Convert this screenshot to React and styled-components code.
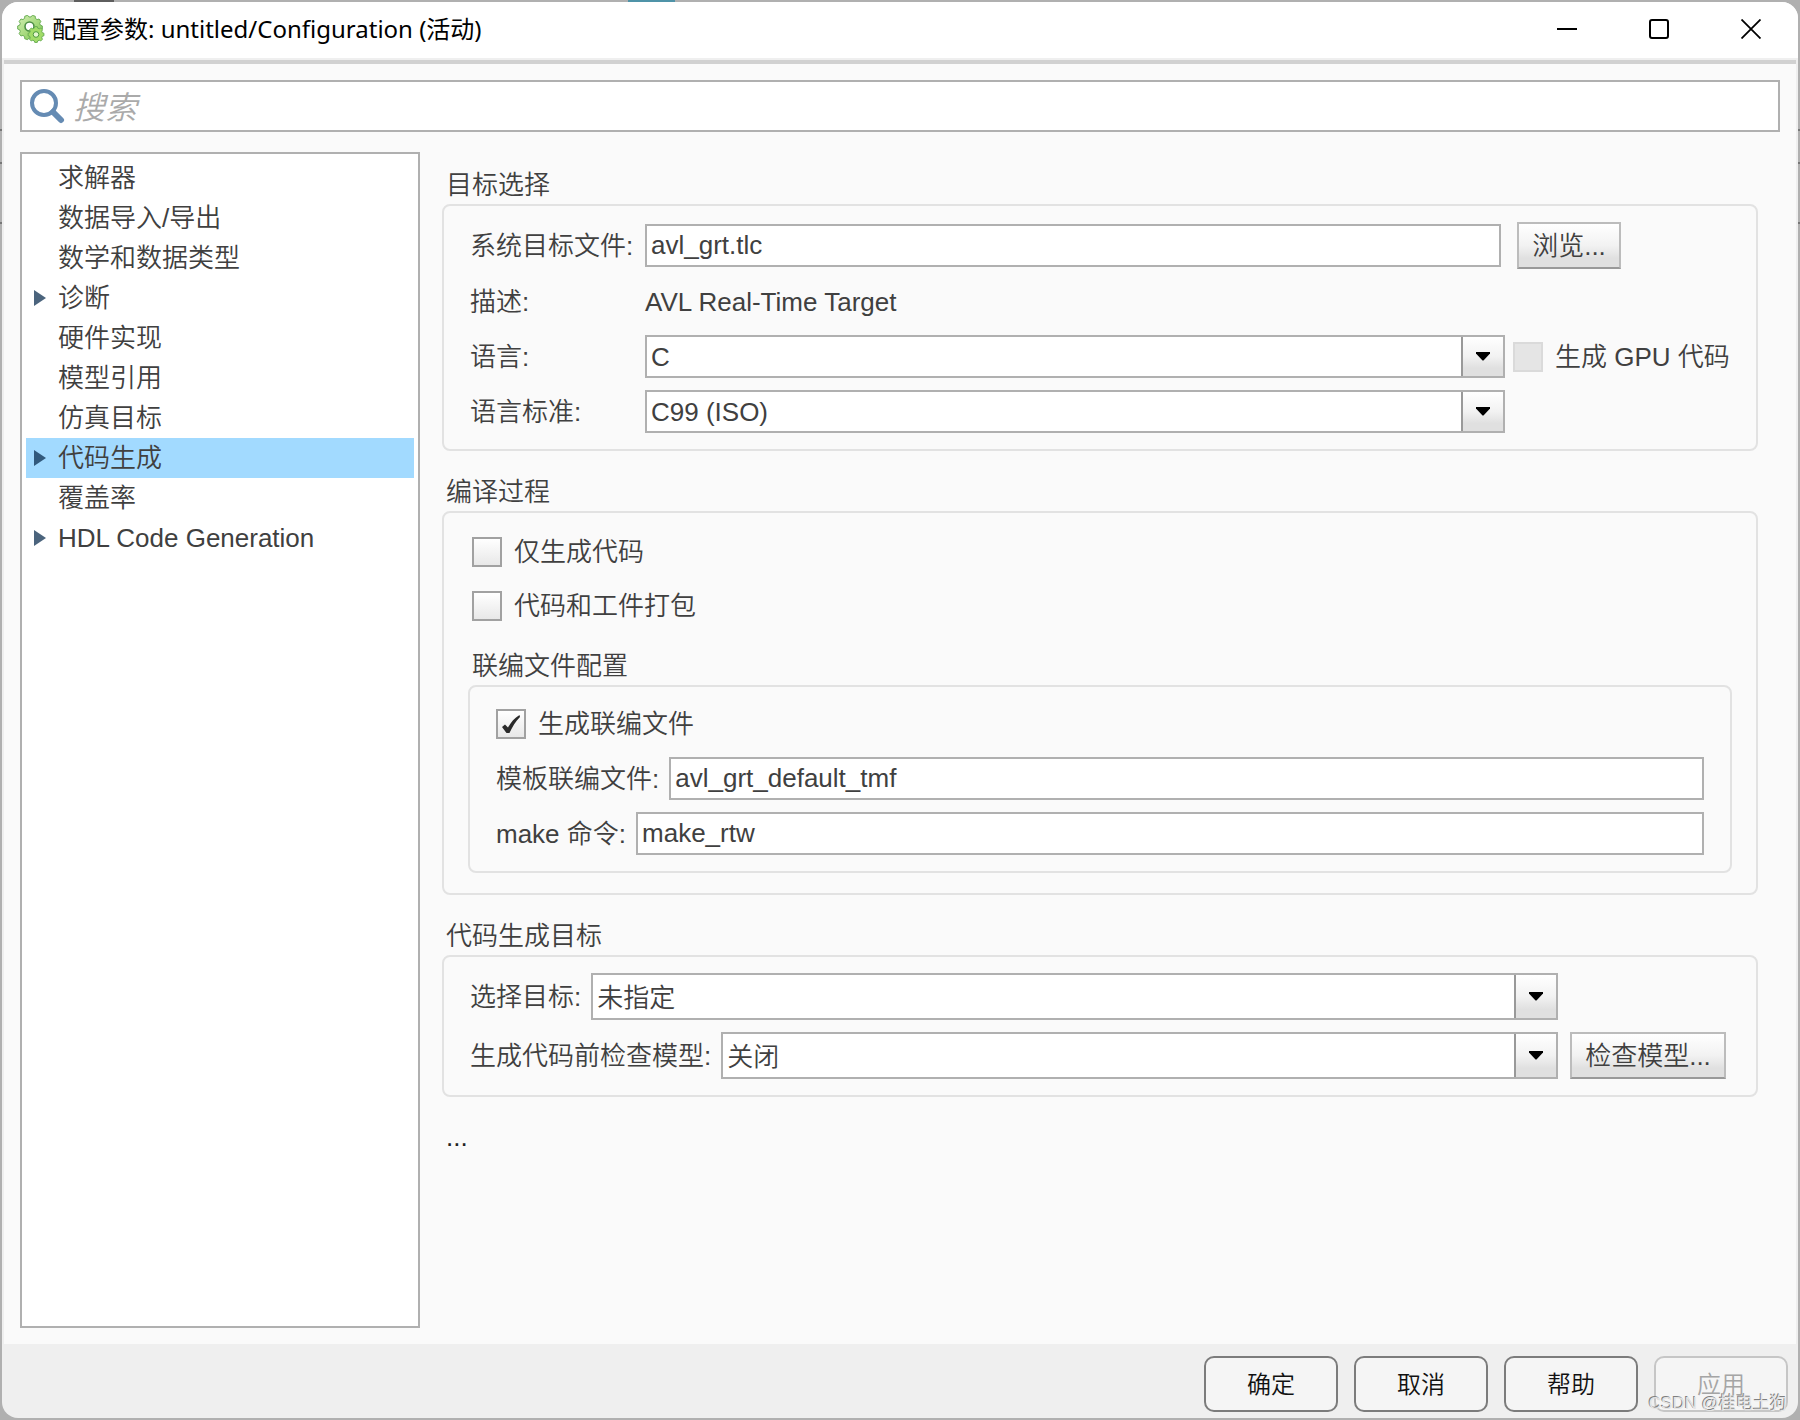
import { useState } from "react";
import styled, { createGlobalStyle } from "styled-components";

const GlobalStyle = createGlobalStyle`
  * {
    box-sizing: border-box;
  }
  body {
    margin: 0;
    background-color: #b0b0b0;
    color: #404040;
    font-family: "Liberation Sans", "Noto Sans CJK SC", sans-serif;
    font-size: 26px;
    font-weight: 350;
  }
  button, input, select {
    font: inherit;
    color: inherit;
  }
`;

// slivers of the windows behind show round the edge
const Desktop = styled.div`
  min-height: 100vh;
  display: flex;
  padding: 2px;
  background-color: #b0b0b0;
  background-image: linear-gradient(#5e5e5e, #5e5e5e),
    linear-gradient(#4f93a8, #4f93a8), linear-gradient(#777777, #777777),
    linear-gradient(#777777, #777777), linear-gradient(#777777, #777777);
  background-repeat: no-repeat;
  background-size: 40px 2px, 47px 2px, 100% 2px, 100% 2px, 100% 2px;
  background-position: 74px 0, 628px 0, 0 129px, 0 162px, 0 222px;
`;

const Window = styled.div`
  flex: 1;
  min-width: 0;
  display: flex;
  flex-direction: column;
  border-radius: 16px;
  overflow: hidden;
  background-color: #efefef;
`;

const TitleBar = styled.header`
  height: 56px;
  display: flex;
  align-items: center;
  padding: 0 1px 2px 15px;
  background-color: #ffffff;
`;

const AppIcon = styled.svg`
  width: 28px;
  height: 28px;
  flex: none;
`;

const Title = styled.h1`
  flex: 1;
  margin: 0 0 0 7px;
  color: #000000;
  font-family: "Noto Sans", "Noto Sans CJK SC", sans-serif;
  font-size: 24px;
  font-weight: 400;
  line-height: 32px;
`;

const WindowButton = styled.button`
  width: 92px;
  height: 54px;
  display: flex;
  align-items: center;
  justify-content: center;
  padding: 0;
  border: none;
  background: none;
  color: #000000;

  &:hover {
    background-color: #e9e9e9;
  }
`;

const Content = styled.main`
  flex: 1;
  display: flex;
  flex-direction: column;
  gap: 20px;
  margin: 2px 2px 0;
  padding: 16px;
  border-top: 4px solid #d1d1d1;
  background-color: #fafafa;
`;

const SearchBox = styled.label`
  height: 52px;
  display: flex;
  align-items: center;
  gap: 8px;
  padding-left: 7px;
  border: 2px solid #b0b0b0;
  background-color: #ffffff;
`;

const SearchInput = styled.input`
  flex: 1;
  min-width: 0;
  height: 48px;
  padding: 4px 0 0;
  border: none;
  outline: none;
  background: none;
  font-size: 32px;

  &::placeholder {
    color: #aaaaaa;
    font-style: italic;
    opacity: 1;
  }
`;

const Columns = styled.div`
  flex: 1;
  display: flex;
  gap: 22px;
`;

const Tree = styled.ul`
  width: 400px;
  flex: none;
  margin: 0;
  padding: 4px;
  border: 2px solid #b0b0b0;
  background-color: #ffffff;
  list-style: none;
`;

const TreeRow = styled.button`
  width: 100%;
  height: 40px;
  display: flex;
  align-items: center;
  gap: 12px;
  padding: 0 0 0 8px;
  border: none;
  background-color: ${({ $active }) => ($active ? "#a2daff" : "transparent")};
  text-align: left;
  line-height: 40px;
`;

const TreeArrow = styled.span`
  width: 12px;
  height: 16px;
  flex: none;
  background-color: ${({ $active }) => ($active ? "#31597c" : "#4b647d")};
  clip-path: polygon(0 0, 100% 50%, 0 100%);
  visibility: ${({ $open }) => ($open ? "visible" : "hidden")};
`;

const Pane = styled.div`
  flex: 1;
  min-width: 0;
  display: flex;
  flex-direction: column;
  gap: 20px;
  padding: 12px 22px 0 0;
`;

const GroupTitle = styled.h2`
  margin: 0;
  padding: 2px 0 0 4px;
  font-size: 26px;
  font-weight: 350;
  line-height: 38px;
`;

const GroupBox = styled.div`
  display: flex;
  flex-direction: column;
  gap: 12px;
  padding: ${({ $nested }) => ($nested ? "18px 24px 20px" : "16px 26px")};
  border: 2px solid #e2e2e2;
  border-radius: 8px;
`;

const NestedGroup = styled.section`
  padding-top: 6px;
`;

const TargetRow = styled.div`
  display: grid;
  grid-template-columns: 175px minmax(0, 1fr) 225px;
  align-items: center;
  min-height: ${({ $text }) => ($text ? "42px" : "0")};
  line-height: 40px;
`;

const Aside = styled.div`
  display: flex;
  padding-left: ${({ $wide }) => ($wide ? "12px" : "8px")};
`;

const FieldCell = styled.div`
  display: flex;
  padding-right: 4px;
`;

const ObjectiveRow = styled.div`
  display: grid;
  grid-template-columns: minmax(0, 1fr) 160px;
  gap: 12px;
  justify-items: start;
`;

const FormRow = styled.div`
  width: 100%;
  display: flex;
  align-items: center;
  gap: 10px;
`;

const Label = styled.label`
  flex: none;
  line-height: 40px;
  white-space: nowrap;
`;

const TextInput = styled.input`
  flex: 1;
  min-width: 0;
  height: 43px;
  padding: 0 4px;
  border: 2px solid #b0b0b0;
  border-radius: 0;
  background-color: #ffffff;
`;

const SelectBox = styled.div`
  flex: 1;
  min-width: 0;
  position: relative;
  display: flex;
`;

const StyledSelect = styled.select`
  flex: 1;
  min-width: 0;
  height: ${({ $tall }) => ($tall ? "47px" : "43px")};
  padding: ${({ $tall }) => ($tall ? "2px 48px 0 4px" : "0 48px 2px 4px")};
  appearance: none;
  border: 2px solid #b0b0b0;
  border-radius: 0;
  background-color: #ffffff;
`;

const SelectArrow = styled.span`
  position: absolute;
  top: 2px;
  right: 2px;
  bottom: 2px;
  width: 42px;
  display: flex;
  align-items: center;
  justify-content: center;
  border-left: 2px solid #999999;
  background: linear-gradient(#ffffff, #f2f2f2 50%, #e0e0e0 80%, #e0e0e0);
  pointer-events: none;
`;

const PushButton = styled.button`
  width: ${({ $wide }) => ($wide ? "156px" : "104px")};
  height: 47px;
  padding: 0;
  border: 2px solid #bcbcbc;
  border-bottom-color: #999999;
  background: linear-gradient(#ffffff, #f2f2f2 50%, #e0e0e0 80%, #e0e0e0);
  line-height: 40px;
`;

const CheckRow = styled.label`
  height: 42px;
  display: flex;
  align-items: center;
  gap: 12px;
  padding-left: ${({ $indent }) => ($indent ? "4px" : "0")};
  line-height: 42px;
  white-space: nowrap;
`;

const CheckBox = styled.span`
  position: relative;
  width: 30px;
  height: 30px;
  flex: none;
`;

const CheckInput = styled.input`
  width: 30px;
  height: 30px;
  display: block;
  margin: 0;
  appearance: none;
  border: 2px solid #a1a1a1;
  background: linear-gradient(#ffffff, #e8e8e8);

  &:disabled {
    border-color: #dadada;
    background: #e5e5e5;
  }
`;

const Tick = styled.svg`
  position: absolute;
  top: 0;
  left: 0;
  pointer-events: none;
`;

const More = styled.p`
  margin: 0;
  padding-left: 4px;
  color: #222222;
  line-height: 40px;
`;

const Footer = styled.footer`
  height: 74px;
  position: relative;
  display: flex;
  justify-content: flex-end;
  gap: 16px;
  padding: 12px 10px 6px;
`;

const FooterButton = styled.button`
  width: 134px;
  height: 56px;
  padding: 0 0 4px;
  border: 2px solid #7c7c7c;
  border-radius: 10px;
  background-color: #f5f5f5;
  color: #111111;
  font-size: 24px;

  &:disabled {
    border-color: #c6c6c6;
    color: #a5a5a5;
  }
`;

const Watermark = styled.span`
  position: absolute;
  right: 11px;
  bottom: 2px;
  color: #e4e4e4;
  font-size: 17px;
  font-weight: 400;
  line-height: 24px;
  text-shadow: -1px -1px 0 #808080;
  pointer-events: none;
`;

const categories = [
  { name: "求解器" },
  { name: "数据导入/导出" },
  { name: "数学和数据类型" },
  { name: "诊断", expandable: true },
  { name: "硬件实现" },
  { name: "模型引用" },
  { name: "仿真目标" },
  { name: "代码生成", expandable: true },
  { name: "覆盖率" },
  { name: "HDL Code Generation", expandable: true },
];

// outline of a cog: `teeth` bumps between the two radii
const cogPath = (cx, cy, inner, outer, teeth) => {
  const step = (Math.PI * 2) / teeth;
  const points = [];
  for (let i = 0; i < teeth; i++) {
    [
      [inner, -0.34],
      [outer, -0.2],
      [outer, 0.2],
      [inner, 0.34],
    ].forEach(([r, offset]) => {
      const angle = (i + offset) * step;
      const x = cx + r * Math.cos(angle);
      const y = cy + r * Math.sin(angle);
      points.push(`${x.toFixed(2)} ${y.toFixed(2)}`);
    });
  }
  return `M${points.join("L")}Z`;
};

const GearsIcon = () => (
  <AppIcon viewBox="0 0 28 28" aria-hidden="true">
    <defs>
      <linearGradient id="cog" x1="0" y1="0" x2="1" y2="1">
        <stop offset="0" stopColor="#d3efb4" />
        <stop offset="1" stopColor="#7fc74e" />
      </linearGradient>
    </defs>
    <g stroke="#6aae55" strokeWidth="1" strokeLinejoin="round">
      <path d={cogPath(13, 12.5, 10.6, 12.4, 10)} fill="url(#cog)" />
      <circle
        cx="12.5"
        cy="11.5"
        r="4.5"
        fill="#ffffff"
        stroke="#4d8f45"
        strokeWidth="1.6"
      />
      <path d={cogPath(19, 19.5, 6.6, 8, 8)} fill="#a2dc68" />
      <circle cx="19" cy="19.5" r="2.8" fill="#e5f6cf" stroke="#4d9a3c" />
    </g>
  </AppIcon>
);

const Select = ({ id, options, tall }) => (
  <SelectBox>
    <StyledSelect id={id} $tall={tall}>
      {options.map((option) => (
        <option key={option}>{option}</option>
      ))}
    </StyledSelect>
    <SelectArrow>
      <svg width="14" height="9" viewBox="0 0 14 9">
        <path d="M0 0h14v1.500L7.500 8.500h-1L0 1.500z" fill="#000000" />
      </svg>
    </SelectArrow>
  </SelectBox>
);

const Check = ({ children, indent, checked, ...rest }) => {
  const [on, setOn] = useState(!!checked);

  return (
    <CheckRow $indent={indent}>
      <CheckBox>
        <CheckInput
          type="checkbox"
          checked={on}
          onChange={() => setOn(!on)}
          {...rest}
        />
        {on && (
          <Tick width="30" height="30" viewBox="0 0 30 30">
            <path
              d="M6 18L9 15.500L12 18.500C15 13 18.500 9 23.500 6L24 8C19.500 12.500 16.500 17.500 13.500 24H10.500Z"
              fill="#2a2a2a"
            />
          </Tick>
        )}
      </CheckBox>
      {children}
    </CheckRow>
  );
};

const App = () => {
  const [active, setActive] = useState("代码生成");

  return (
    <Desktop>
      <GlobalStyle />
      <Window>
        <TitleBar>
          <GearsIcon />
          <Title>配置参数: untitled/Configuration (活动)</Title>
          <WindowButton aria-label="最小化">
            <svg width="20" height="20">
              <path d="M0 10h20" stroke="currentColor" strokeWidth="2" />
            </svg>
          </WindowButton>
          <WindowButton aria-label="最大化">
            <svg width="20" height="20">
              <rect
                x="1"
                y="1"
                width="18"
                height="18"
                rx="2"
                fill="none"
                stroke="currentColor"
                strokeWidth="2"
              />
            </svg>
          </WindowButton>
          <WindowButton aria-label="关闭">
            <svg width="20" height="20">
              <path
                d="M0.500 0.500l19 19M19.500 0.500l-19 19"
                stroke="currentColor"
                strokeWidth="1.800"
              />
            </svg>
          </WindowButton>
        </TitleBar>

        <Content>
          <SearchBox>
            <svg width="36" height="36" viewBox="0 0 36 36" fill="none">
              <circle cx="15" cy="15" r="12" stroke="#658bb3" strokeWidth="4" />
              <path
                d="M24 24l8 8"
                stroke="#658bb3"
                strokeWidth="6"
                strokeLinecap="round"
              />
            </svg>
            <SearchInput placeholder="搜索" aria-label="搜索" />
          </SearchBox>

          <Columns>
            <Tree>
              {categories.map(({ name, expandable }) => (
                <li key={name}>
                  <TreeRow
                    $active={name === active}
                    onClick={() => setActive(name)}
                  >
                    <TreeArrow $open={expandable} $active={name === active} />
                    {name}
                  </TreeRow>
                </li>
              ))}
            </Tree>

            <Pane>
              <section>
                <GroupTitle>目标选择</GroupTitle>
                <GroupBox>
                  <TargetRow>
                    <Label htmlFor="target-file">系统目标文件:</Label>
                    <FieldCell>
                      <TextInput id="target-file" defaultValue="avl_grt.tlc" />
                    </FieldCell>
                    <Aside $wide>
                      <PushButton>浏览...</PushButton>
                    </Aside>
                  </TargetRow>
                  <TargetRow $text>
                    <span>描述:</span>
                    <span>AVL Real-Time Target</span>
                  </TargetRow>
                  <TargetRow>
                    <Label htmlFor="language">语言:</Label>
                    <Select id="language" options={["C", "C++"]} />
                    <Aside>
                      <Check disabled>生成 GPU 代码</Check>
                    </Aside>
                  </TargetRow>
                  <TargetRow>
                    <Label htmlFor="standard">语言标准:</Label>
                    <Select id="standard" options={["C99 (ISO)"]} />
                  </TargetRow>
                </GroupBox>
              </section>

              <section>
                <GroupTitle>编译过程</GroupTitle>
                <GroupBox $nested>
                  <Check indent>仅生成代码</Check>
                  <Check indent>代码和工件打包</Check>
                  <NestedGroup>
                    <GroupTitle>联编文件配置</GroupTitle>
                    <GroupBox>
                      <Check checked>生成联编文件</Check>
                      <FormRow>
                        <Label htmlFor="template">模板联编文件:</Label>
                        <TextInput
                          id="template"
                          defaultValue="avl_grt_default_tmf"
                        />
                      </FormRow>
                      <FormRow>
                        <Label htmlFor="make">make 命令:</Label>
                        <TextInput id="make" defaultValue="make_rtw" />
                      </FormRow>
                    </GroupBox>
                  </NestedGroup>
                </GroupBox>
              </section>

              <section>
                <GroupTitle>代码生成目标</GroupTitle>
                <GroupBox>
                  <ObjectiveRow>
                    <FormRow>
                      <Label htmlFor="objective">选择目标:</Label>
                      <Select id="objective" options={["未指定"]} tall />
                    </FormRow>
                  </ObjectiveRow>
                  <ObjectiveRow>
                    <FormRow>
                      <Label htmlFor="check">生成代码前检查模型:</Label>
                      <Select id="check" options={["关闭"]} tall />
                    </FormRow>
                    <PushButton $wide>检查模型...</PushButton>
                  </ObjectiveRow>
                </GroupBox>
              </section>

              <More>...</More>
            </Pane>
          </Columns>
        </Content>

        <Footer>
          <FooterButton>确定</FooterButton>
          <FooterButton>取消</FooterButton>
          <FooterButton>帮助</FooterButton>
          <FooterButton disabled>应用</FooterButton>
          <Watermark>CSDN @桂电土狗</Watermark>
        </Footer>
      </Window>
    </Desktop>
  );
};

export default App;
